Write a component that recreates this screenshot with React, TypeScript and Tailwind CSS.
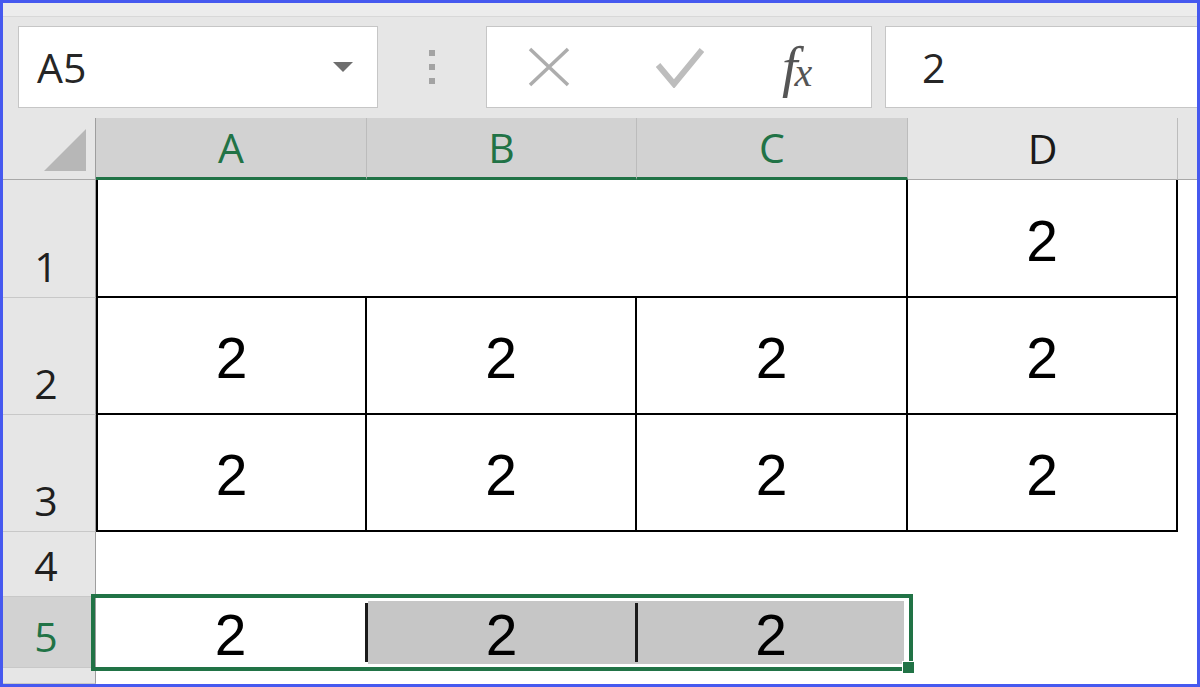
import React from 'react';

const ui = { fontFamily: '"Open Sans", "Liberation Sans", sans-serif' };
const cellFont = { fontFamily: '"Liberation Sans", Arial, sans-serif' };

const ColHead: React.FC<{ label: string; active?: boolean }> = ({ label, active }) => (
  <div
    style={ui}
    className={`relative flex items-center justify-center border-r border-[#bcbcbc] text-[41px] leading-none ${
      active ? 'bg-[#d2d2d2] text-[#217346] border-b-[3px] border-b-[#217346]' : 'bg-[#e6e6e6] text-[#1a1a1a] border-b border-b-[#a8a8a8]'
    }`}
  >
    {label}
  </div>
);

const RowHead: React.FC<{ label: string; active?: boolean }> = ({ label, active }) => (
  <div
    style={ui}
    className={`flex items-end justify-center pb-[10px] pr-[6px] border-r border-[#9e9e9e] border-b border-b-[#c8c8c8] text-[41px] leading-none ${
      active ? 'bg-[#d2d2d2] text-[#217346]' : 'bg-[#e6e6e6] text-[#1f1f1f]'
    }`}
  >
    {label}
  </div>
);

const Cell: React.FC<{ value?: string; className?: string }> = ({ value, className = '' }) => (
  <div style={cellFont} className={`flex items-center justify-center pt-[6px] text-[57px] leading-none text-black ${className}`}>
    {value}
  </div>
);

export default function App() {
  return (
    <div className="w-[1200px] h-[687px] overflow-hidden border-[3px] border-[#4659ef] bg-[#e6e6e6] flex flex-col">
      {/* top strip */}
      <div className="h-[14px] shrink-0 bg-[#ececec] border-b border-[#d8d8d8]" />

      {/* formula bar */}
      <div className="h-[101px] shrink-0 flex items-start pt-[9px] pl-[15px]">
        <div style={ui} className="shrink-0 w-[360px] h-[82px] bg-white border border-[#c6c6c6] flex items-center pl-[18px] pr-[24px]">
          <span className="text-[41px] text-[#262626] leading-none">A5</span>
          <div className="ml-auto w-0 h-0 border-l-[10px] border-r-[10px] border-t-[10px] border-l-transparent border-r-transparent border-t-[#6e6e6e]" />
        </div>
        <div className="shrink-0 w-[108px] h-[82px] flex flex-col items-center justify-center gap-[8px]">
          <div className="w-[6px] h-[6px] bg-[#a3a3a3]" />
          <div className="w-[6px] h-[6px] bg-[#a3a3a3]" />
          <div className="w-[6px] h-[6px] bg-[#a3a3a3]" />
        </div>
        <div className="shrink-0 w-[386px] h-[82px] bg-white border border-[#c6c6c6] flex items-center">
          <svg width="44" height="40" viewBox="0 0 44 40" className="ml-[40px]">
            <path d="M3 2 L41 38 M41 2 L3 38" stroke="#adadad" strokeWidth="3.5" fill="none" />
          </svg>
          <svg width="48" height="42" viewBox="0 0 48 42" className="ml-[85px]">
            <path d="M2 19 L18 38 L46 4" stroke="#bdbdbd" strokeWidth="6" fill="none" strokeLinejoin="miter" />
          </svg>
          <span
            style={{ fontFamily: '"Liberation Serif", "DejaVu Serif", serif' }}
            className="ml-[78px] italic text-[#555555] text-[56px] leading-none tracking-[-3px]"
          >
            f<span className="text-[40px]">x</span>
          </span>
        </div>
        <div style={ui} className="shrink-0 ml-[13px] w-[340px] h-[82px] bg-white border border-[#c6c6c6] flex items-center pl-[36px]">
          <span className="text-[41px] text-[#262626] leading-none">2</span>
        </div>
      </div>

      {/* sheet */}
      <div className="flex-1 grid grid-cols-[93px_271px_270px_271px_270px_1fr] grid-rows-[62px_118px_117px_117px_65px_71px_1fr] bg-white">
        {/* header row */}
        <div className="relative bg-[#e6e6e6] border-r border-[#9e9e9e] border-b border-b-[#a8a8a8]">
          <svg width="42" height="42" viewBox="0 0 42 42" className="absolute right-[9px] bottom-[8px]">
            <polygon points="42,0 42,42 0,42" fill="#b7b7b7" />
          </svg>
        </div>
        <ColHead label="A" active />
        <ColHead label="B" active />
        <ColHead label="C" active />
        <ColHead label="D" />
        <div className="bg-[#e6e6e6] border-b border-b-[#a8a8a8]" />

        {/* row 1 */}
        <RowHead label="1" />
        <Cell className="col-span-3 border-l-2 border-r-2 border-b-2 border-black" />
        <Cell value="2" className="border-r-2 border-b-2 border-black" />
        <div />

        {/* row 2 */}
        <RowHead label="2" />
        <Cell value="2" className="border-l-2 border-r-2 border-b-2 border-black" />
        <Cell value="2" className="border-r-2 border-b-2 border-black" />
        <Cell value="2" className="border-r-2 border-b-2 border-black" />
        <Cell value="2" className="border-r-2 border-b-2 border-black" />
        <div />

        {/* row 3 */}
        <RowHead label="3" />
        <Cell value="2" className="border-l-2 border-r-2 border-b-2 border-black" />
        <Cell value="2" className="border-r-2 border-b-2 border-black" />
        <Cell value="2" className="border-r-2 border-b-2 border-black" />
        <Cell value="2" className="border-r-2 border-b-2 border-black" />
        <div />

        {/* row 4 */}
        <RowHead label="4" />
        <div className="col-span-5" />

        {/* row 5 - selected A5:C5 */}
        <RowHead label="5" active />
        <div className="col-span-3 relative flex">
          <Cell value="2" className="w-[269px]" />
          <div className="w-[3px] bg-[#1a1a1a] my-[6px]" />
          <div className="flex-1 flex bg-[#c6c6c6] my-[4px] mr-[4px]">
            <Cell value="2" className="w-[267px]" />
            <div className="w-[3px] bg-[#1a1a1a] my-[2px]" />
            <Cell value="2" className="flex-1" />
          </div>
          <div className="absolute -left-[5px] -right-[5px] -top-[3px] -bottom-[3px] border-[4px] border-[#217346] pointer-events-none" />
          <div className="absolute -right-[7px] -bottom-[6px] w-[13px] h-[13px] bg-[#217346] border border-white" />
        </div>
        <div className="col-span-2" />

        {/* row 6 (partial) */}
        <RowHead label="" />
        <div className="col-span-5" />
      </div>
    </div>
  );
}
